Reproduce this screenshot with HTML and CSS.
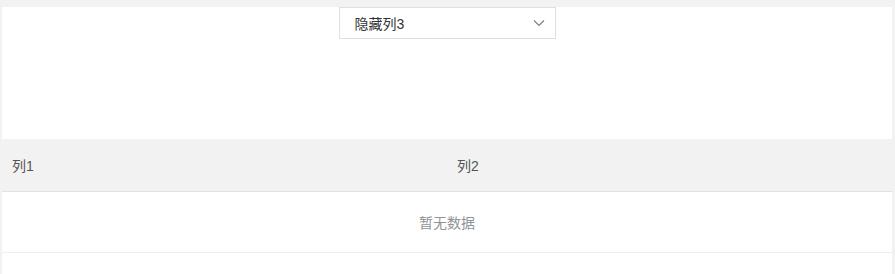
FILE: index.html
```html
<!DOCTYPE html>
<html lang="zh">
<head>
<meta charset="utf-8">
<link rel="stylesheet" href="styles.css">
</head>
<body>
<div class="page">
  <div class="toolbar">
    <div class="select">
      <span class="select-text">隐藏列3</span>
      <svg class="arrow" width="12" height="8" viewBox="0 0 12 8"><path d="M1 1.5 L6 6.5 L11 1.5" fill="none" stroke="#7a7d85" stroke-width="1.1"/></svg>
    </div>
  </div>
  <div class="table">
    <div class="thead">
      <div class="th">列1</div>
      <div class="th">列2</div>
    </div>
    <div class="empty">暂无数据</div>
  </div>
</div>
</body>
</html>
```
FILE: styles.css
```css
html, body {
  margin: 0;
  padding: 0;
  height: 100%;
}
body {
  background: #f2f2f2;
  padding: 7px 3px 0 2px;
  box-sizing: border-box;
  font-family: "Liberation Sans", "Noto Sans CJK SC", sans-serif;
  font-size: 14px;
}
.page {
  background: #fff;
  height: 100%;
}
.toolbar {
  display: flex;
  justify-content: center;
  height: 132px;
}
.select {
  width: 217px;
  height: 32px;
  box-sizing: border-box;
  border: 1px solid #dcdfe6;
  display: flex;
  align-items: center;
  justify-content: space-between;
  padding: 0 10px 0 15px;
  color: #333;
}
.select-text {
  font-size: 14px;
}
.table {
  display: flex;
  flex-direction: column;
}
.thead {
  display: grid;
  grid-template-columns: 1fr 1fr;
  height: 52px;
  background: #f2f2f2;
  border-bottom: 1px solid #e2e2e2;
}
.th {
  display: flex;
  align-items: center;
  padding: 0 10px;
  color: #555;
}
.empty {
  height: 60px;
  display: flex;
  align-items: center;
  justify-content: center;
  color: #909399;
  border-bottom: 1px solid #ebeef5;
}
```
